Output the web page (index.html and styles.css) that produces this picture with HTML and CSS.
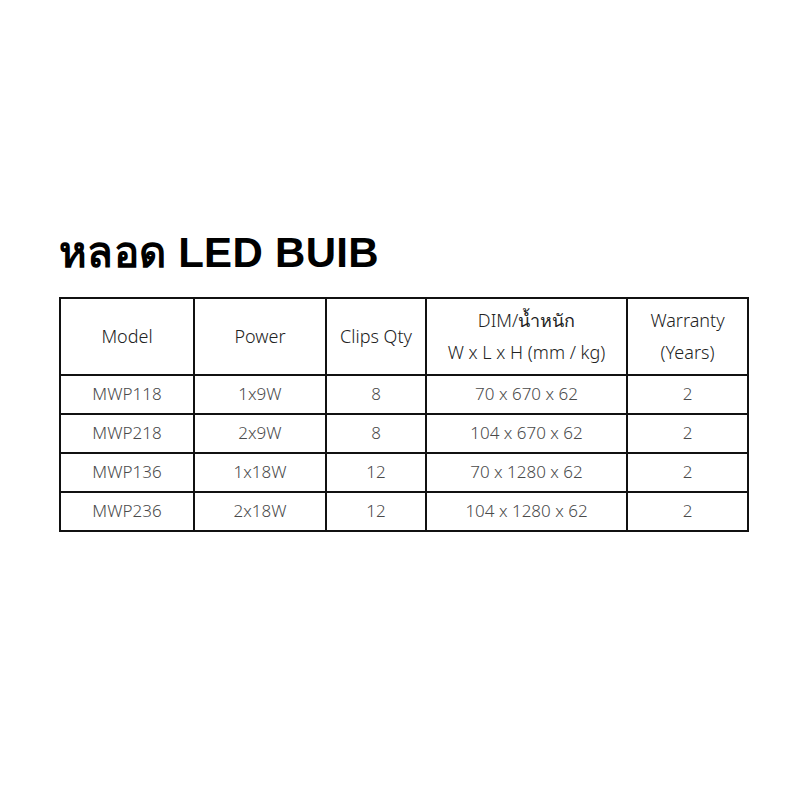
FILE: index.html
```html
<!DOCTYPE html>
<html lang="th">
<head>
<meta charset="utf-8">
<title>หลอด LED BUIB</title>
<link rel="stylesheet" href="styles.css">
</head>
<body>
<main class="page">
  <h1 class="title">หลอด LED BUIB</h1>
  <table class="spec">
    <colgroup>
      <col class="c-model">
      <col class="c-power">
      <col class="c-clips">
      <col class="c-dim">
      <col class="c-warranty">
    </colgroup>
    <thead>
      <tr>
        <th>Model</th>
        <th>Power</th>
        <th>Clips Qty</th>
        <th>DIM/น้ำหนัก<br>W x L x H (mm / kg)</th>
        <th>Warranty<br>(Years)</th>
      </tr>
    </thead>
    <tbody>
      <tr><td>MWP118</td><td>1x9W</td><td>8</td><td>70 x 670 x 62</td><td>2</td></tr>
      <tr><td>MWP218</td><td>2x9W</td><td>8</td><td>104 x 670 x 62</td><td>2</td></tr>
      <tr><td>MWP136</td><td>1x18W</td><td>12</td><td>70 x 1280 x 62</td><td>2</td></tr>
      <tr><td>MWP236</td><td>2x18W</td><td>12</td><td>104 x 1280 x 62</td><td>2</td></tr>
    </tbody>
  </table>
</main>
</body>
</html>
```

FILE: styles.css
```css
html, body {
  margin: 0;
  padding: 0;
  background: #ffffff;
}

.page {
  padding: 229px 0 0 59px;
  width: 688px;
}

.title {
  margin: 0 0 20px 0;
  font-family: "Liberation Sans", "Noto Sans", sans-serif;
  font-weight: 700;
  font-size: 42px;
  line-height: 48px;
  color: #000000;
  letter-spacing: 0.3px;
}

.spec {
  border-collapse: collapse;
  width: 688px;
  table-layout: fixed;
  font-family: "Noto Sans", "Open Sans", sans-serif;
  font-weight: 300;
}

.c-model { width: 134px; }
.c-power { width: 132px; }
.c-clips { width: 100px; }
.c-dim { width: 201px; }
.c-warranty { width: 121px; }

.spec th,
.spec td {
  border: 2px solid #111111;
  text-align: center;
  vertical-align: middle;
  padding: 0;
}

.spec th {
  height: 73px;
  font-weight: 300;
  font-size: 18px;
  line-height: 32px;
  color: #222222;
  padding-bottom: 2px;
}

.spec td {
  height: 35px;
  font-size: 17px;
  line-height: 20px;
  color: #4a4a4a;
  padding-bottom: 2px;
}
```
